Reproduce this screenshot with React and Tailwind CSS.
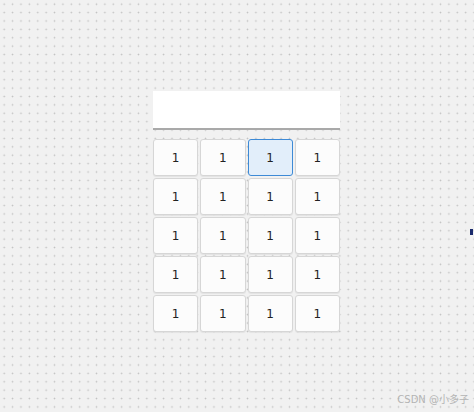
const rows = 5;
const cols = 4;

const Key = ({ active }) => (
  <button
    className={
      active
        ? 'h-[37px] rounded-[3px] border border-[#3d8ad6] bg-[#e2eefa] text-[12px] text-[#222]'
        : 'h-[37px] rounded-[3px] border border-[#d6d6d6] bg-[#fcfcfc] text-[12px] text-[#222] shadow-[0_1px_1px_rgba(0,0,0,0.06)]'
    }
  >
    1
  </button>
);

export default function App() {
  return (
    <div
      className="relative h-[412px] w-[474px] overflow-hidden bg-[#f1f1f1] bg-[radial-gradient(circle,#c0c0c0_0.8px,transparent_1px)] bg-[length:8.4px_8.4px] pl-[153px] pt-[91px]"
      style={{ fontFamily: '"DejaVu Sans", "Noto Sans CJK SC", sans-serif' }}
    >
      <div className="w-[187px]">
        <div className="h-[39px] border-b-2 border-[#a9a9a9] bg-white" />
        <div className="mt-[9px] grid grid-cols-4 gap-[2px]">
          {Array.from({ length: rows * cols }).map((_, i) => (
            <Key key={i} active={i === 2} />
          ))}
        </div>
      </div>
      <div className="absolute right-[1px] top-[229px] h-[6px] w-[3px] bg-[#1a2a6c]" />
      <div className="absolute bottom-[5px] right-[5px] text-[10px] text-[#b4b4b4]">
        CSDN @小多子
      </div>
    </div>
  );
}
